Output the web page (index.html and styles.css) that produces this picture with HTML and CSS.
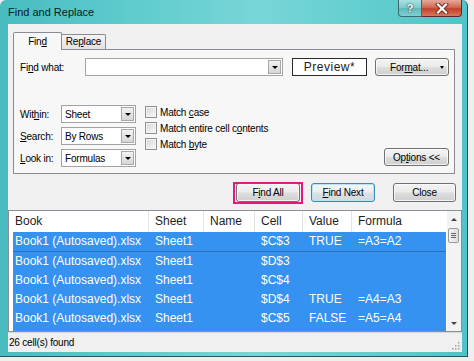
FILE: index.html
```html
<!DOCTYPE html>
<html>
<head>
<meta charset="utf-8">
<link rel="stylesheet" href="styles.css">
</head>
<body>
<div class="window">
  <div class="titlebar">
    <span class="title">Find and Replace</span>
    <div class="caption">
      <span class="cap-help">?</span>
      <span class="cap-close">
        <svg width="14" height="11" viewBox="0 0 14 11">
          <path d="M3 1.5 L11 9.5 M11 1.5 L3 9.5" stroke="#6b2a1e" stroke-width="4" stroke-linecap="square"/>
          <path d="M3 1.5 L11 9.5 M11 1.5 L3 9.5" stroke="#ffffff" stroke-width="2.2" stroke-linecap="square"/>
        </svg>
      </span>
    </div>
  </div>
  <div class="client">
    <div class="tabs">
      <div class="tab active">Fin<u>d</u></div>
      <div class="tab rep">Re<u>p</u>lace</div>
    </div>
    <div class="panel">
      <div class="find-row">
        <span class="lbl-find">Fi<u>n</u>d what:</span>
        <div class="combo wide"><span class="combo-text"></span><span class="drop"><span class="arrow"></span></span></div>
        <div class="preview">Preview*</div>
        <div class="btn format"><span>For<u>m</u>at...</span><span class="tri"></span></div>
      </div>
      <div class="opts">
        <div class="selects">
          <span>Wit<u>h</u>in:</span>
          <div class="combo"><span class="combo-text">Sheet</span><span class="drop"><span class="arrow"></span></span></div>
          <span><u>S</u>earch:</span>
          <div class="combo"><span class="combo-text">By Rows</span><span class="drop"><span class="arrow"></span></span></div>
          <span><u>L</u>ook in:</span>
          <div class="combo"><span class="combo-text">Formulas</span><span class="drop"><span class="arrow"></span></span></div>
        </div>
        <div class="checks">
          <div class="check"><span class="box"></span><span>Match <u>c</u>ase</span></div>
          <div class="check"><span class="box"></span><span>Match entire cell c<u>o</u>ntents</span></div>
          <div class="check"><span class="box"></span><span>Match <u>b</u>yte</span></div>
        </div>
        <div class="btn options">Op<u>t</u>ions &lt;&lt;</div>
      </div>
    </div>
    <div class="actions">
      <div class="btn act hl">F<u>i</u>nd All</div>
      <div class="btn act default"><span><u>F</u>ind Next</span></div>
      <div class="btn act close">Close</div>
    </div>
    <div class="results">
      <div class="results-main">
        <div class="thead">
          <span>Book</span><span>Sheet</span><span>Name</span><span>Cell</span><span>Value</span><span>Formula</span>
        </div>
        <div class="tbody">
          <div class="row first"><span>Book1 (Autosaved).xlsx</span><span>Sheet1</span><span></span><span>$C$3</span><span>TRUE</span><span>=A3=A2</span></div>
          <div class="row"><span>Book1 (Autosaved).xlsx</span><span>Sheet1</span><span></span><span>$D$3</span><span></span><span></span></div>
          <div class="row"><span>Book1 (Autosaved).xlsx</span><span>Sheet1</span><span></span><span>$C$4</span><span></span><span></span></div>
          <div class="row"><span>Book1 (Autosaved).xlsx</span><span>Sheet1</span><span></span><span>$D$4</span><span>TRUE</span><span>=A4=A3</span></div>
          <div class="row"><span>Book1 (Autosaved).xlsx</span><span>Sheet1</span><span></span><span>$C$5</span><span>FALSE</span><span>=A5=A4</span></div>
        </div>
      </div>
      <div class="vscroll">
        <div class="sb-btn"><span class="up"></span></div>
        <div class="thumb"><span></span><span></span><span></span></div>
        <div class="sb-track"></div>
        <div class="sb-btn"><span class="down"></span></div>
      </div>
    </div>
    <div class="status">
      <span>26 cell(s) found</span>
      <svg class="grip" width="8" height="8" viewBox="0 0 8 8">
        <rect x="6" y="0" width="1.5" height="1.5" fill="#a0a0a0"/>
        <rect x="3" y="3" width="1.5" height="1.5" fill="#a0a0a0"/>
        <rect x="6" y="3" width="1.5" height="1.5" fill="#a0a0a0"/>
        <rect x="0" y="6" width="1.5" height="1.5" fill="#a0a0a0"/>
        <rect x="3" y="6" width="1.5" height="1.5" fill="#a0a0a0"/>
        <rect x="6" y="6" width="1.5" height="1.5" fill="#a0a0a0"/>
      </svg>
    </div>
  </div>
</div>
</body>
</html>
```

FILE: styles.css
```css
* { box-sizing: border-box; }
html, body { margin: 0; padding: 0; }
body {
  width: 474px;
  height: 361px;
  overflow: hidden;
  background: #eef0f0;
  font-family: "Liberation Sans", Arial, sans-serif;
  font-size: 10px;
  letter-spacing: -0.2px;
  color: #000;
}
u { text-decoration: underline; }

.window {
  width: 468px;
  height: 357px;
  display: flex;
  flex-direction: column;
  background: linear-gradient(90deg, #48bcbf 0%, #5ccacc 25%, #78d6d7 55%, #62cdcf 80%, #4fc3c6 100%);
  border-right: 1px solid #2e5254;
  border-bottom: 1px solid #2e5254;
  border-radius: 6px 6px 0 0;
}

.titlebar {
  height: 24px;
  display: flex;
  align-items: flex-start;
}
.title {
  padding-left: 8px;
  line-height: 24px;
  font-size: 11px;
  letter-spacing: 0;
  color: #0b1a1a;
}
.caption {
  margin-left: auto;
  margin-right: 5px;
  display: flex;
}
.cap-help {
  width: 24px;
  height: 17px;
  display: flex;
  align-items: center;
  justify-content: center;
  background: linear-gradient(#a8e2e3, #79c9cb 50%, #5fb9bc 51%, #7fd0d1);
  border: 1px solid #3c6b6d;
  border-top: none;
  border-radius: 0 0 0 4px;
  color: #fff;
  font-weight: bold;
  font-size: 11px;
  text-shadow: 0 0 2px #244, 0 0 1px #244;
}
.cap-close {
  width: 40px;
  height: 17px;
  display: flex;
  align-items: center;
  justify-content: center;
  background: linear-gradient(#e6a89a, #d06a55 45%, #c2402a 55%, #d8775d);
  border: 1px solid #5a2c22;
  border-top: none;
  border-left: none;
  border-radius: 0 0 4px 0;
}

.client {
  margin-left: 8px;
  width: 454px;
  height: 328px;
  background: #f0f0f0;
  display: flex;
  flex-direction: column;
}

.tabs {
  height: 25px;
  padding-left: 5px;
  display: flex;
  align-items: flex-end;
}
.tab {
  border: 1px solid #898c95;
  border-bottom: none;
  text-align: center;
}
.tab.active {
  width: 49px;
  height: 18px;
  line-height: 17px;
  background: #f7f7f7;
  margin-bottom: -1px;
  position: relative;
  z-index: 1;
  border-radius: 2px 2px 0 0;
}
.tab.rep {
  width: 44px;
  height: 15px;
  line-height: 14px;
  border-left: none;
  background: linear-gradient(#f4f4f4, #e2e2e2);
  border-radius: 0 2px 0 0;
}

.panel {
  margin-left: 5px;
  width: 442px;
  height: 125px;
  border: 1px solid #898c95;
  background: #f7f7f7;
  padding: 8px 0 0 6px;
}
.find-row {
  display: flex;
  align-items: center;
  height: 18px;
}
.lbl-find { width: 65px; }

.combo {
  height: 18px;
  width: 75px;
  display: flex;
  align-items: center;
  background: #fff;
  border: 1px solid #a3a3a3;
  padding: 1px;
}
.combo.wide { width: 198px; }
.combo-text {
  flex: 1;
  padding-left: 2px;
}
.drop {
  width: 13px;
  height: 14px;
  border: 1px solid #a8a8a8;
  background: linear-gradient(#f2f2f2, #d6d6d6);
  display: flex;
  align-items: center;
  justify-content: center;
}
.arrow {
  width: 0;
  height: 0;
  border-left: 3px solid transparent;
  border-right: 3px solid transparent;
  border-top: 3px solid #000;
}

.preview {
  margin-left: 9px;
  width: 75px;
  height: 18px;
  background: #fff;
  border: 1px solid #2a2a2a;
  text-align: center;
  line-height: 16px;
  font-size: 12px;
  letter-spacing: 0.5px;
  color: #222;
}

.btn {
  display: flex;
  align-items: center;
  justify-content: center;
  border: 1px solid #707070;
  border-radius: 3px;
  background: linear-gradient(#f3f3f3 0%, #ebebeb 48%, #dddddd 52%, #cfcfcf 100%);
  box-shadow: inset 0 0 0 1px rgba(255,255,255,0.7);
}
.format {
  margin-left: 8px;
  width: 74px;
  height: 18px;
  justify-content: flex-start;
  padding-left: 14px;
}
.tri {
  margin-left: auto;
  margin-right: 4px;
  width: 0;
  height: 0;
  border-left: 2.5px solid transparent;
  border-right: 2.5px solid transparent;
  border-top: 3px solid #000;
}

.opts {
  margin-top: 29px;
  height: 62px;
  display: flex;
}
.selects {
  display: grid;
  grid-template-columns: 41px 75px;
  grid-auto-rows: 18px;
  row-gap: 4px;
  align-items: center;
}
.checks {
  margin-left: 9px;
  margin-top: -1px;
  display: flex;
  flex-direction: column;
}
.check {
  height: 16px;
  display: flex;
  align-items: center;
  gap: 3px;
}
.box {
  width: 12px;
  height: 12px;
  border: 1px solid #8e8f8f;
  background: linear-gradient(135deg, #d6d6d6, #f8f8f8);
  box-shadow: inset 0 0 0 1px #f4f4f4;
}
.options {
  margin-left: auto;
  margin-right: 5px;
  margin-bottom: 1px;
  align-self: flex-end;
  width: 65px;
  height: 18px;
}

.actions {
  margin-top: 9px;
  height: 19px;
  padding-right: 6px;
  display: flex;
  justify-content: flex-end;
}
.act { height: 19px; }
.hl {
  width: 64px;
  position: relative;
}
.hl::after {
  content: "";
  position: absolute;
  left: -4px;
  right: -4px;
  top: -2px;
  bottom: -3px;
  border: 2px solid #e4187e;
}
.default {
  margin-left: 11px;
  width: 64px;
  border-color: #3b8cb3;
  box-shadow: inset 0 0 0 1px #b6e6f5;
  background: linear-gradient(#f4f7f8 0%, #eaeef0 48%, #dde2e4 52%, #d2d9dc 100%);
}
.close {
  margin-left: 18px;
  width: 63px;
}

.results {
  margin-top: 8px;
  height: 122px;
  border: 1px solid #8a9099;
  background: #fff;
  display: flex;
}
.results-main {
  width: 438px;
  display: flex;
  flex-direction: column;
}
.thead {
  height: 21px;
  display: grid;
  grid-template-columns: 140px 55px 51px 48px 49px 1fr;
  font-size: 12px;
  letter-spacing: 0;
  color: #1e1e1e;
}
.thead span {
  padding-left: 6px;
  line-height: 21px;
  border-right: 1px solid #e4e4e4;
}
.thead span:last-child { border-right: none; }
.tbody {
  margin-left: 4px;
  margin-right: 1px;
  height: 99px;
  background: #3592f0;
}
.row {
  height: 19px;
  display: grid;
  grid-template-columns: 136px 55px 51px 48px 49px 1fr;
  font-size: 12px;
  letter-spacing: 0;
  line-height: 19px;
  color: #fff;
}
.row span {
  padding-left: 6px;
  white-space: nowrap;
}
.row span:first-child { padding-left: 2px; }
.row.first {
  height: 20px;
  border-bottom: 1px solid #2c6fb8;
}

.vscroll {
  width: 14px;
  display: flex;
  flex-direction: column;
  background: #f3f3f3;
}
.sb-btn {
  height: 16px;
  display: flex;
  align-items: center;
  justify-content: center;
}
.up, .down {
  width: 0;
  height: 0;
  border-left: 3px solid transparent;
  border-right: 3px solid transparent;
}
.up { border-bottom: 3px solid #444; }
.down { border-top: 3px solid #444; }
.thumb {
  margin: 1px 0 0 1px;
  width: 11px;
  height: 15px;
  border: 1px solid #9a9a9a;
  border-radius: 2px;
  background: linear-gradient(90deg, #f4f4f4, #dedede);
  display: flex;
  flex-direction: column;
  align-items: center;
  justify-content: center;
  gap: 1px;
}
.thumb span {
  width: 5px;
  height: 1px;
  background: #666;
}
.sb-track { flex: 1; }

.status {
  height: 20px;
  padding-left: 1px;
  display: flex;
  align-items: center;
  border-top: 1px solid #d8d8d8;
}
.grip {
  margin-left: auto;
  margin-right: 2px;
  align-self: flex-end;
  margin-bottom: 2px;
}
```
